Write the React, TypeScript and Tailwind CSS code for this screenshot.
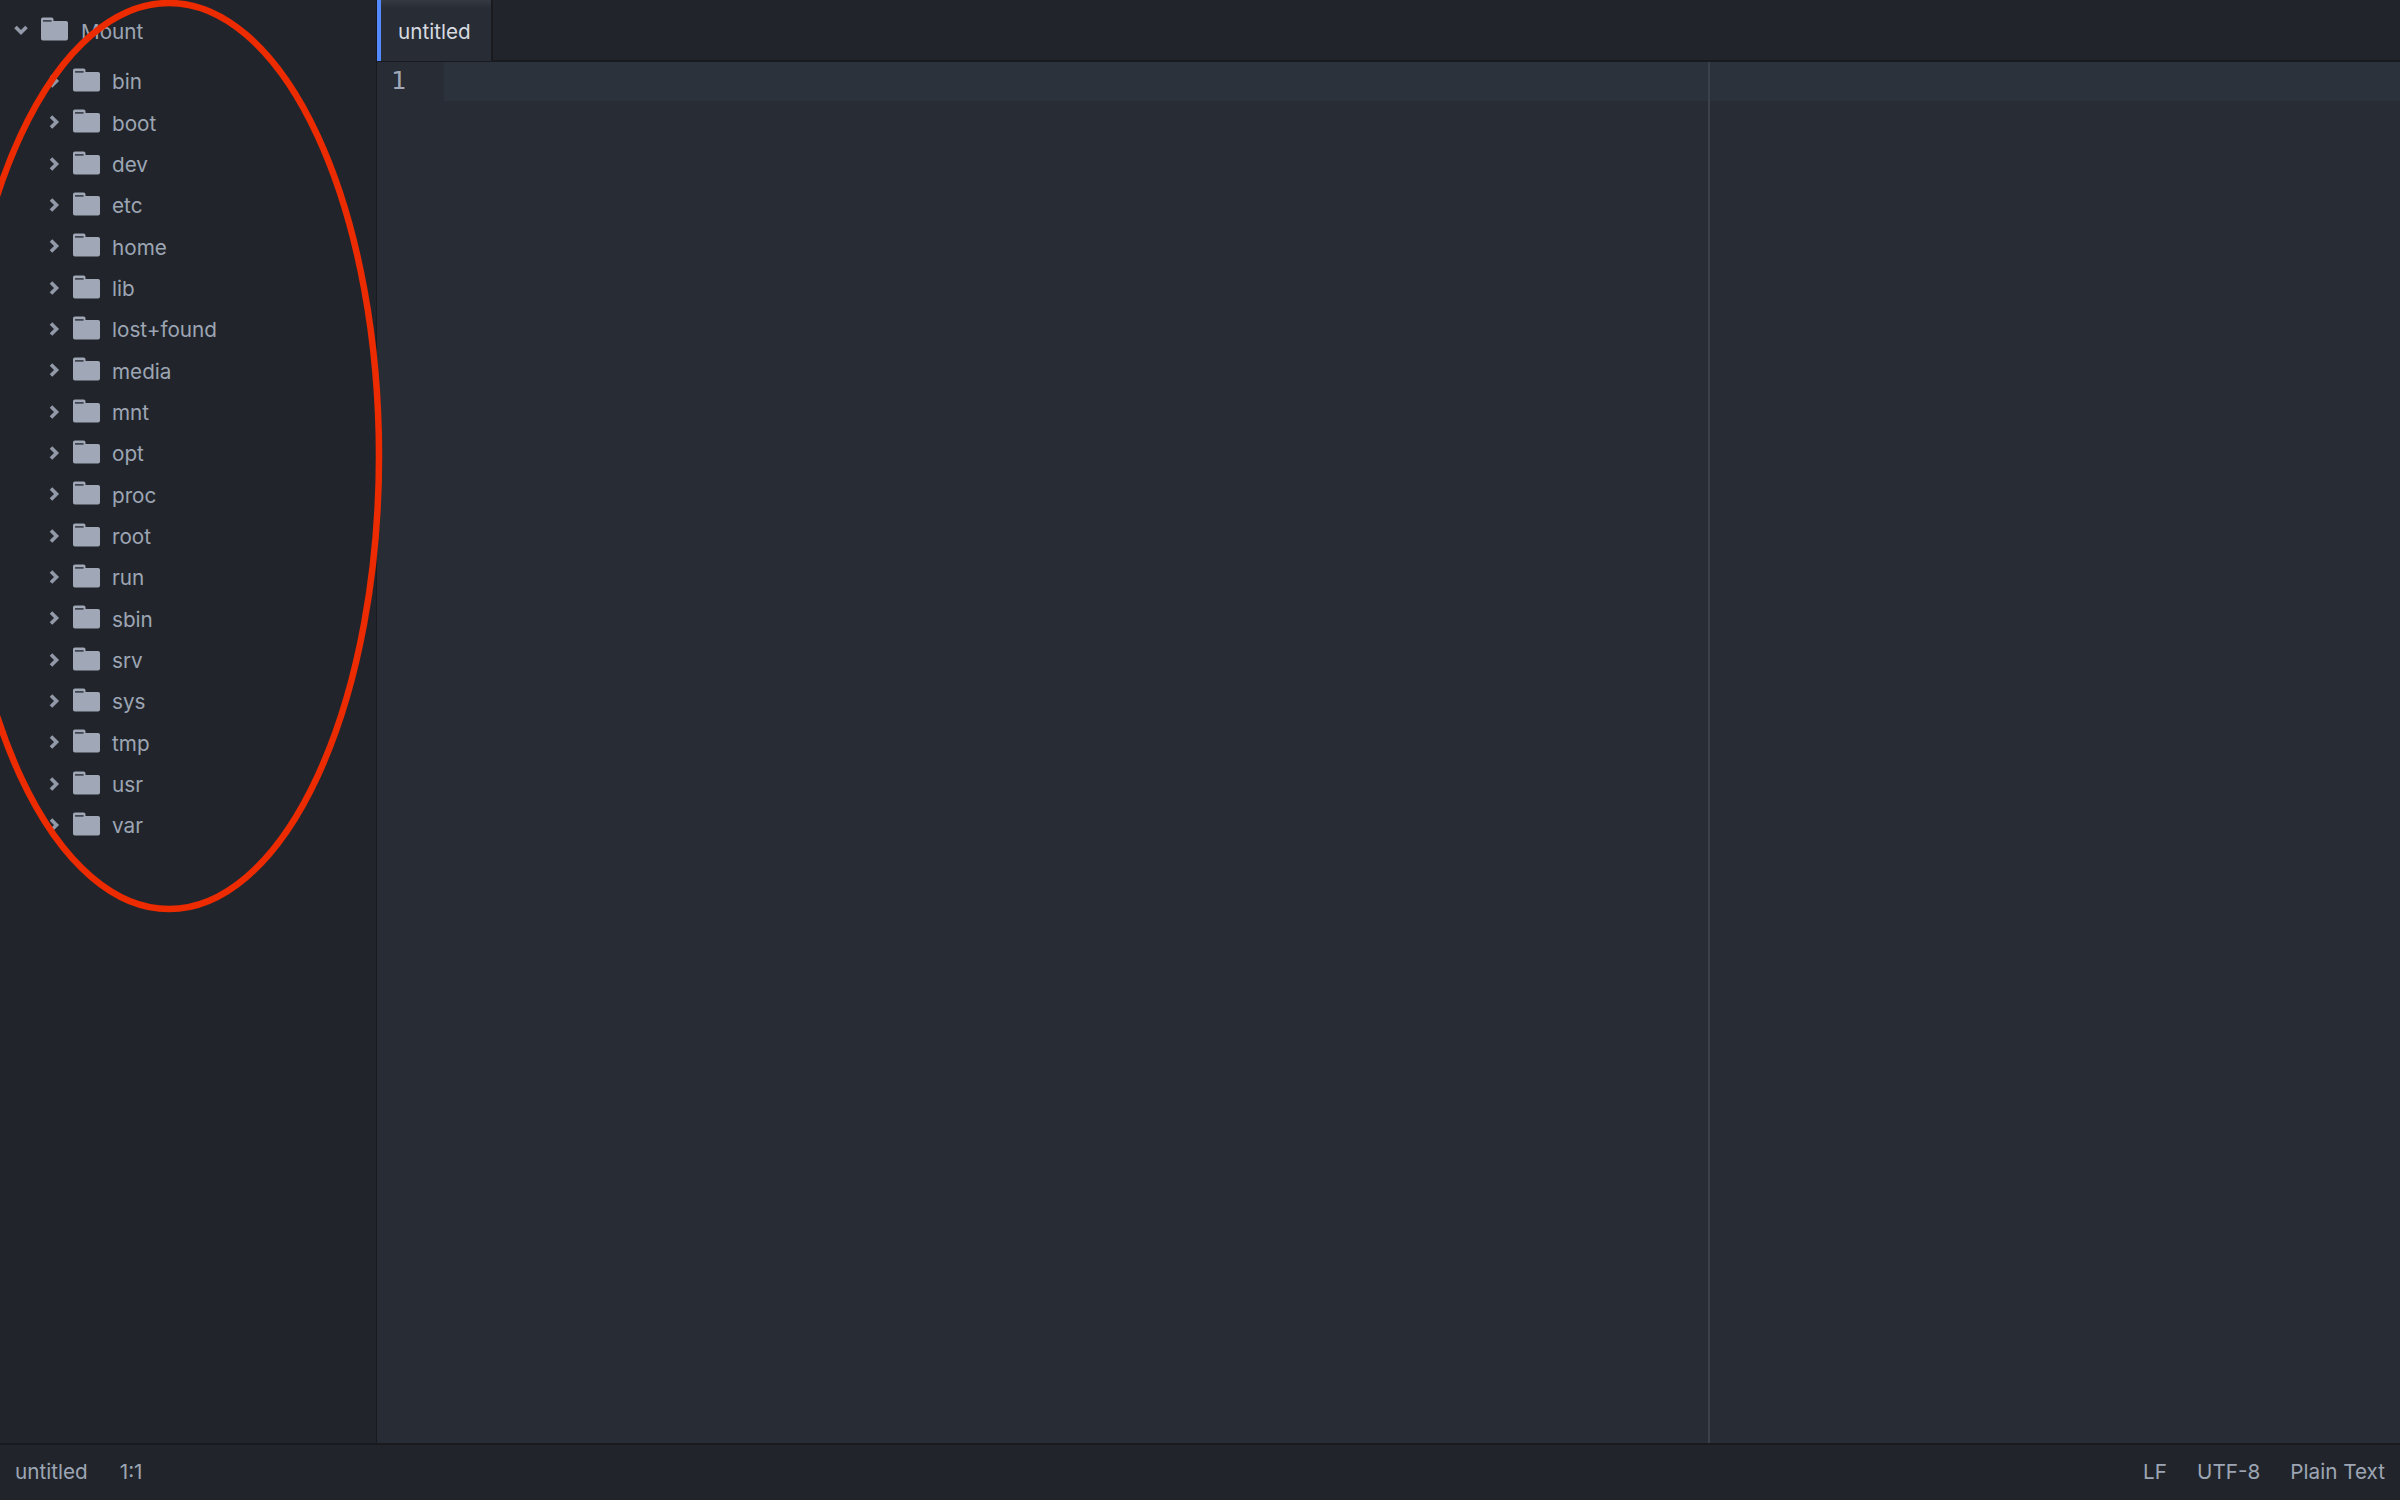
const dirs = [
  "bin", "boot", "dev", "etc", "home", "lib", "lost+found", "media", "mnt", "opt",
  "proc", "root", "run", "sbin", "srv", "sys", "tmp", "usr", "var",
]

function FolderIcon() {
  return (
    <svg width="27" height="24" viewBox="0 0 27 24" className="shrink-0">
      <path
        d="M0 2.5C0 1.2 .8 .5 2 .5h8.5c1.2 0 2 .7 2 2V4H25c1.2 0 2 .8 2 2v15.5c0 1.2-.8 2-2 2H2c-1.2 0-2-.8-2-2Z"
        fill="#a0a7b6"
      />
      <path d="M2 3.2h8.6V4.6H2Z" fill="#2a2e36" />
    </svg>
  )
}

function Chevron({ open }: { open?: boolean }) {
  return (
    <svg width="14" height="14" viewBox="0 0 14 14" className="shrink-0 -mt-[1px]">
      <path
        d={open ? "M1.5 4 7 9.5 12.5 4" : "M4 1.5 9.5 7 4 12.5"}
        fill="none"
        stroke="#9299a8"
        strokeWidth="3.6"
      />
    </svg>
  )
}

function TreeRow({ name }: { name: string }) {
  return (
    <div className="flex h-[41.33px] items-center pl-[47px]">
      <Chevron />
      <div className="ml-[12px] -mt-[3px]">
        <FolderIcon />
      </div>
      <span className="ml-[12px] mt-[2px] text-[20.7px] leading-none text-[#9da5b4]">{name}</span>
    </div>
  )
}

export default function App() {
  return (
    <div className="relative flex h-[1500px] w-[2400px] flex-col overflow-hidden bg-[#282c34] font-['Inter',sans-serif]">
      <div className="flex min-h-0 flex-1">
        {/* Tree view */}
        <aside className="w-[377px] shrink-0 border-r border-[#181a1f] bg-[#21252b]">
          <div className="flex h-[61px] items-center pl-[14px]">
            <Chevron open />
            <div className="ml-[13px] -mt-[3px]">
              <FolderIcon />
            </div>
            <span className="ml-[13px] mt-[3px] text-[20.7px] leading-none text-[#9da5b4]">Mount</span>
          </div>
          <div>
            {dirs.map((d) => (
              <TreeRow key={d} name={d} />
            ))}
          </div>
        </aside>

        {/* Editor */}
        <main className="flex min-w-0 flex-1 flex-col">
          <div className="flex h-[62px] shrink-0 border-b-2 border-[#181a1f] bg-[#21252b]">
            <div className="flex h-[61px] w-[116px] items-center border-l-4 border-r-2 border-l-[#528bff] border-r-[#181a1f] bg-[linear-gradient(#343943,#282c34_8px)] pl-[17px]">
              <span className="mt-[3px] text-[20.7px] leading-none text-[#d7dae0]">untitled</span>
            </div>
          </div>
          <div className="relative min-h-0 flex-1">
            <div className="flex h-[39px]">
              <div className="w-[67px] pt-[2px] pl-[14px] font-['DejaVu_Sans_Mono',monospace] text-[25px] leading-[34px] text-[#a0a7b6]">
                1
              </div>
              <div className="flex-1 bg-[#2c323c]" />
            </div>
            {/* Wrap guide */}
            <div className="absolute inset-y-0 left-[1331px] w-[2px] bg-[#3c414b]" />
          </div>
        </main>
      </div>

      {/* Status bar */}
      <footer className="flex h-[57px] shrink-0 items-center justify-between border-t-2 border-[#181a1f] bg-[#21252b] px-[15px] text-[20.7px] leading-none text-[#9da5b4]">
        <div className="flex gap-[32px]">
          <span>untitled</span>
          <span>1:1</span>
        </div>
        <div className="flex gap-[30px]">
          <span>LF</span>
          <span>UTF-8</span>
          <span>Plain Text</span>
        </div>
      </footer>

      {/* Red annotation ellipse */}
      <svg
        className="pointer-events-none absolute top-0 left-0"
        width="400"
        height="920"
        viewBox="0 0 400 920"
      >
        <ellipse cx="169" cy="456" rx="210" ry="453" fill="none" stroke="#ec2b00" strokeWidth="6.5" />
      </svg>
    </div>
  )
}
